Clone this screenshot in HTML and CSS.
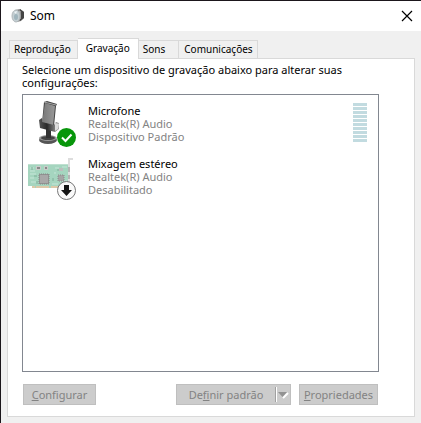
FILE: index.html
```html
<!DOCTYPE html>
<html lang="pt-BR">
<head>
<meta charset="utf-8">
<title>Som</title>
<link rel="stylesheet" href="styles.css">
</head>
<body>
<main class="window">
  <header class="titlebar">
    <svg class="app-icon" viewBox="0 0 14 16" aria-hidden="true">
      <path d="M4 2 9 1 13 4V10L10 13 6 14z" fill="#888"/>
      <path d="M9 1 13 4V10L9 13z" fill="#444"/>
      <path d="M9 3v8" stroke="#ddd"/>
      <ellipse cx="5" cy="8" rx="4" ry="6" fill="#c3ced2" stroke="#b0b7ba"/>
      <ellipse cx="5" cy="9" rx="2" ry="3" fill="#9fb4bc"/>
      <path d="M3 4 6 3 5 6z" fill="#eef4f6"/>
    </svg>
    <h1 class="title">Som</h1>
    <button class="close" type="button" aria-label="Fechar">
      <svg class="close-icon" viewBox="0 0 12 12" aria-hidden="true"><path d="M1 1 11 11M11 1 1 11" stroke="#000" stroke-width="1.2"/></svg>
    </button>
  </header>
  <div class="content">
    <div class="tabs" role="tablist">
      <button class="tab first" type="button" role="tab">Reprodução</button>
      <button class="tab active" type="button" role="tab" aria-selected="true">Gravação</button>
      <button class="tab sounds" type="button" role="tab">Sons</button>
      <button class="tab" type="button" role="tab">Comunicações</button>
    </div>
    <section class="panel" role="tabpanel">
      <p class="hint">Selecione um dispositivo de gravação abaixo para alterar suas configurações:</p>
      <ul class="devices">
        <li class="device">
          <svg class="device-icon" viewBox="0 0 56 50" aria-hidden="true">
            <defs>
              <linearGradient id="mic" x1="0" x2="1"><stop offset="0" stop-color="#777"/><stop offset="1" stop-color="#999"/></linearGradient>
              <linearGradient id="holder" x1="0" x2="1"><stop offset="0" stop-color="#555"/><stop offset=".4" stop-color="#292929"/><stop offset="1" stop-color="#aaa"/></linearGradient>
            </defs>
            <ellipse cx="24" cy="42" rx="9" ry="4" fill="#555"/>
            <ellipse cx="24" cy="40" rx="9" ry="3" fill="#999"/>
            <ellipse cx="24" cy="40" rx="7" ry="2" fill="#444"/>
            <path d="M22 30h5v10h-5z" fill="#333"/>
            <path d="M20 4 23 3 33 6 32 8 30 28 18 25z" fill="#444"/>
            <path d="M21 5 31 8 29 28 18 25z" fill="url(#mic)"/>
            <path d="M20 4 32 7" stroke="#aaa"/>
            <path d="M15 22 18 20V24L30 27 32 24 35 25V31L31 34 16 30z" fill="url(#holder)"/>
            <path d="M31 25 35 26 34 31 31 33z" fill="#ddd"/>
            <circle cx="42.500" cy="39.500" r="9.500" fill="#08960b"/>
            <path d="M38 39.500 41.500 43 47.500 36.500" fill="none" stroke="#fff" stroke-width="2"/>
          </svg>
          <div class="device-text">
            <h2 class="device-name">Microfone</h2>
            <p>Realtek(R) Audio</p>
            <p>Dispositivo Padrão</p>
          </div>
          <div class="meter" role="img" aria-label="Nível">
            <i></i><i></i><i></i><i></i><i></i><i></i><i></i><i></i><i></i><i></i>
          </div>
        </li>
        <li class="device">
          <svg class="device-icon" viewBox="0 0 56 50" aria-hidden="true">
            <path d="M4 13h40v22H29v2H9v-2H4z" fill="#a5d5bf"/>
            <path d="M4 13h40v1H4z" fill="#bfe0d0"/>
            <path d="M8 35h3v2H8zM12 35h13v2H12zM27 35h9v2h-9z" fill="#dcc8a8"/>
            <path d="M49 8H45V33" fill="none" stroke="#ddd" stroke-width="2"/>
            <path d="M44 16h2v5h-2zM44 24h2v4h-2z" fill="#b4b4b4"/>
            <path d="M6 17h4M6 20h5M6 23h6M6 27h4M7 31h5M31 17h4M36 30h7M30 22h2M38 16h5M28 33h6" stroke="#c6e6d8"/>
            <path d="M8 16v3M10 25h3M13 30v3M29 27v3M34 18v2" stroke="#7fae98"/>
            <path d="M12 15h5v4h-5zM20 15h4v4h-4z" fill="#c9cbc9"/>
            <path d="M13 16h3v2h-3zM21 16h2v2h-2z" fill="#888"/>
            <path d="M15 23h10v10H15z" fill="#929292" stroke="#888" stroke-dasharray="1 1"/>
            <path d="M16 24h8v8h-8z" fill="#a8a8a8"/>
            <path d="M34 24h6v6h-6z" fill="#a5a5a5" stroke="#888" stroke-dasharray="1 1"/>
            <path d="M35 17h4v3h-4z" fill="#bdbdbd"/>
            <circle cx="42.500" cy="39.500" r="9" fill="#fafafa" stroke="#777"/>
            <path d="M40 34h5v5h3l-5.500 6-5.500-6h3z" fill="#151515"/>
          </svg>
          <div class="device-text">
            <h2 class="device-name">Mixagem estéreo</h2>
            <p>Realtek(R) Audio</p>
            <p>Desabilitado</p>
          </div>
        </li>
      </ul>
      <footer class="actions">
        <button class="btn configure" type="button" disabled><span><u>C</u>onfigurar</span></button>
        <div class="split">
          <button class="split-main" type="button" disabled><span>De<u>f</u>inir padrão</span></button>
          <button class="split-arrow" type="button" disabled aria-label="Mais opções">
            <svg class="arrow-icon" viewBox="0 0 12 8" aria-hidden="true"><path d="M6 7 11 2" stroke="#fff" stroke-width="2"/><path d="M1 1h9L5.500 6z" fill="#929292"/></svg>
          </button>
        </div>
        <button class="btn properties" type="button" disabled><span><u>P</u>ropriedades</span></button>
      </footer>
    </section>
  </div>
</main>
</body>
</html>
```
FILE: styles.css
```css
* { box-sizing: border-box; }
body {
  margin: 0;
  background: #f0f0f0;
  color: #000;
  font: 11px/13px "Noto Sans", "Open Sans", sans-serif;
}
h1, h2, p, ul { margin: 0; padding: 0; font: inherit; }
button { margin: 0; padding: 0; border: 0; background: none; color: inherit; font: inherit; }
.window {
  display: flex;
  flex-direction: column;
  min-height: 100vh;
  border: solid #1b161b;
  border-width: 1px 0 0 1px;
}
.titlebar {
  display: flex;
  align-items: center;
  height: 30px;
  padding: 0 8px 0 10px;
  background: #fff;
}
.app-icon { width: 14px; height: 16px; }
.title { flex: 1; margin-left: 5px; font-size: 12px; line-height: 16px; }
.close { display: flex; }
.close-icon { width: 12px; height: 12px; }
.content { flex: 1; display: flex; flex-direction: column; padding: 7px 6px 6px; }
.tabs { display: flex; align-items: flex-end; height: 20px; padding-left: 2px; }
.tab {
  height: 18px;
  padding: 0 4px 0 5px;
  border: 1px solid #d9d9d9;
  border-width: 1px 1px 0 0;
  background: #f0f0f0;
  font-size: 10px;
  white-space: nowrap;
}
.tab.first { padding: 0 6px 0 4px; border-left-width: 1px; }
.tab.active { position: relative; height: 21px; margin-bottom: -1px; padding: 0 8px 2px; background: #fff; }
.tab.sounds { padding: 0 13px 0 4px; }
.panel {
  flex: 1;
  display: flex;
  flex-direction: column;
  padding: 4px 35px 11px 14px;
  border: 1px solid #d9d9d9;
  background: #fff;
}
.hint { padding-bottom: 5px; }
.devices { flex: 1; padding: 3px 11px 3px 1px; border: 1px solid #828790; list-style: none; }
.device { display: flex; align-items: flex-start; height: 53px; }
.device-icon { width: 56px; height: 50px; }
.device-text { flex: 1; padding: 6px 0 0 8px; color: #838383; }
.device-name { color: #000; }
.meter { display: grid; gap: 1px; width: 14px; margin-top: 5px; }
.meter i { height: 3px; background: #c2dbe0; }
.actions { display: flex; height: 33px; padding: 12px 1px 0; }
.btn, .split { height: 21px; border: 1px solid #bfbfbf; background: #ccc; color: #838383; }
.configure { width: 73px; }
.split { display: flex; width: 115px; margin: 0 8px 0 auto; }
.split-main { flex: 1; }
.split-arrow { display: flex; align-items: center; justify-content: center; width: 15px; height: 15px; margin-top: 2px; border-left: 1px solid #a0a0a0; box-shadow: inset 1px 0 #fff; }
.arrow-icon { width: 12px; height: 8px; }
.properties { width: 79px; }
```
